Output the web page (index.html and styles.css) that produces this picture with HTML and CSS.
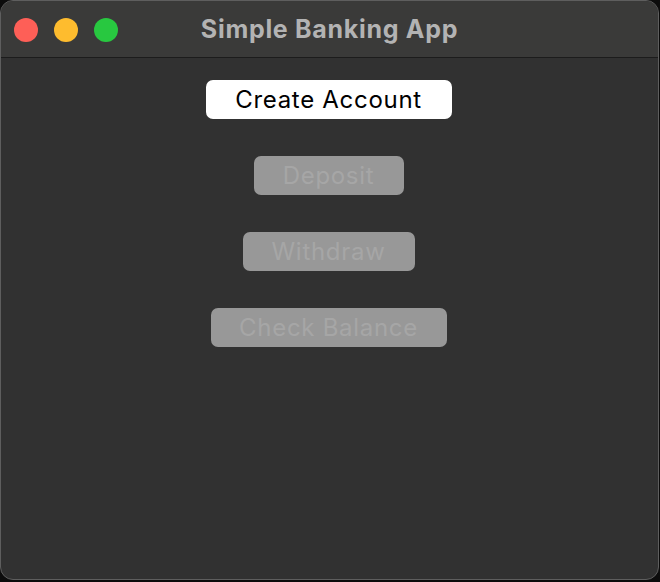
FILE: index.html
```html
<!DOCTYPE html>
<html lang="en">
<head>
<meta charset="utf-8">
<title>Simple Banking App</title>
<link rel="stylesheet" href="styles.css">
</head>
<body>
<div class="window">
  <header class="titlebar">
    <div class="lights">
      <span class="light light-close"></span>
      <span class="light light-min"></span>
      <span class="light light-max"></span>
    </div>
    <div class="title">Simple Banking App</div>
  </header>
  <main class="content">
    <button class="btn btn-primary btn-create">Create Account</button>
    <button class="btn btn-disabled btn-deposit" disabled>Deposit</button>
    <button class="btn btn-disabled btn-withdraw" disabled>Withdraw</button>
    <button class="btn btn-disabled btn-balance" disabled>Check Balance</button>
  </main>
</div>
</body>
</html>
```

FILE: styles.css
```css
html, body {
  margin: 0;
  padding: 0;
  background: #0c0c0c;
  width: 660px;
  height: 582px;
  overflow: hidden;
}

.window {
  box-sizing: border-box;
  width: 659px;
  height: 580px;
  border: 1px solid #5e5e5e;
  border-radius: 13px;
  background: #313131;
  overflow: hidden;
  display: flex;
  flex-direction: column;
  font-family: Inter, "Liberation Sans", sans-serif;
}

.titlebar {
  position: relative;
  height: 56px;
  flex: none;
  background: #3a3a39;
  border-bottom: 1px solid #1c1c1c;
  display: flex;
  align-items: center;
  justify-content: center;
}

.lights {
  position: absolute;
  left: 13px;
  top: 17px;
  display: flex;
  gap: 16px;
}

.light {
  width: 24px;
  height: 24px;
  border-radius: 50%;
  display: block;
}

.light-close { background: #fe5f57; }
.light-min { background: #febc2e; }
.light-max { background: #28c840; }

.title {
  color: #b3b3b3;
  font-weight: 700;
  font-size: 25px;
  letter-spacing: 0.7px;
  margin-left: 0px;
  margin-top: 0px;
}

.content {
  flex: 1;
  display: flex;
  flex-direction: column;
  align-items: center;
  padding-top: 22px;
  gap: 37px;
}

.btn {
  box-sizing: border-box;
  height: 39px;
  border: none;
  border-radius: 7px;
  font-family: Inter, "Liberation Sans", sans-serif;
  font-size: 24px;
  letter-spacing: 0.7px;
  padding: 0;
  display: flex;
  align-items: center;
  justify-content: center;
  margin-left: -2px;
}

.btn-primary {
  background: #ffffff;
  color: #000000;
}

.btn-disabled {
  background: #989898;
  color: #a6a6a6;
}

.btn-create { width: 246px; }
.btn-deposit { width: 150px; }
.btn-withdraw { width: 172px; }
.btn-balance { width: 236px; }
```
